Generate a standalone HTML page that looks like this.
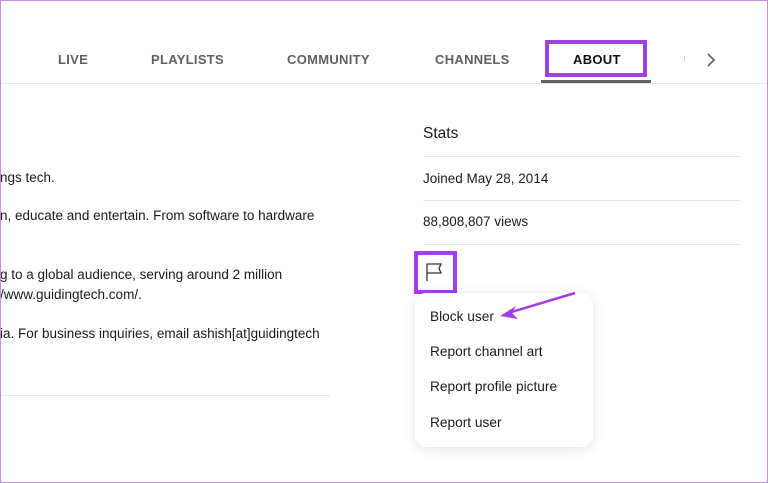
<!DOCTYPE html>
<html><head><style>
body{margin:0;width:768px;height:483px;overflow:hidden;background:#fff;font-family:"Liberation Sans",Arial,sans-serif;position:relative}
.frame{position:absolute;left:0;top:0;width:766px;height:481px;border:1px solid #c58fdd;pointer-events:none}
.t{position:absolute;white-space:nowrap}
.tab{position:absolute;top:52px;font-size:13px;font-weight:bold;color:#606060;letter-spacing:.3px}
.hl{position:absolute;background:#e5e5e5;height:1px}
.txt{font-size:13.5px;color:#1a1a1a}
.menu{position:absolute;left:415px;top:293px;width:178px;height:154px;background:#fff;border-radius:11px;box-shadow:0 2px 12px rgba(0,0,0,.12)}
.mi{position:absolute;left:15px;font-size:13.7px;color:#1a1a1a;white-space:nowrap}
</style></head><body>
<div class="tab" style="left:58px">LIVE</div>
<div class="tab" style="left:151px">PLAYLISTS</div>
<div class="tab" style="left:287px">COMMUNITY</div>
<div class="tab" style="left:435px">CHANNELS</div>
<div class="tab" style="left:573px;color:#0f0f0f">ABOUT</div>
<div style="position:absolute;left:545px;top:40px;width:94px;height:29px;border:4px solid #a43ee8"></div>
<div style="position:absolute;left:684px;top:56px;width:1px;height:5px;background:#ccc"></div>
<svg style="position:absolute;left:704px;top:52px" width="14" height="16"><path d="M4 2 L10 8 L4 14" stroke="#606060" stroke-width="1.6" fill="none"/></svg>
<div class="hl" style="left:0;top:83px;width:768px"></div>
<div style="position:absolute;left:541px;top:80px;width:110px;height:3px;background:#606060"></div>

<div class="t txt" style="left:0;top:170px">ngs tech.</div>
<div class="t txt" style="left:0;top:208px">n, educate and entertain. From software to hardware</div>
<div class="t txt" style="left:0;top:267px">g to a global audience, serving around 2 million</div>
<div class="t txt" style="left:0;top:287px">/www.guidingtech.com/.</div>
<div class="t txt" style="left:0;top:326px">ia. For business inquiries, email ashish[at]guidingtech</div>
<div class="hl" style="left:0;top:395px;width:330px"></div>

<div class="t" style="left:423px;top:125px;font-size:15.5px;color:#1a1a1a">Stats</div>
<div class="hl" style="left:423px;top:156px;width:317px"></div>
<div class="t txt" style="left:423px;top:171px">Joined May 28, 2014</div>
<div class="hl" style="left:423px;top:200px;width:317px"></div>
<div class="t txt" style="left:423px;top:214px">88,808,807 views</div>
<div class="hl" style="left:423px;top:244px;width:317px"></div>

<div style="position:absolute;left:414px;top:251px;width:35px;height:35px;border:4px solid #a43ee8"></div>
<svg style="position:absolute;left:424px;top:261px" width="22" height="22"><path d="M3 20 V3 H17 L15 7.5 L17 12 H3" stroke="#333" stroke-width="1.3" fill="none" stroke-linejoin="miter"/></svg>

<div class="menu">
<div class="mi" style="top:16px">Block user</div>
<div class="mi" style="top:51px">Report channel art</div>
<div class="mi" style="top:86px">Report profile picture</div>
<div class="mi" style="top:122px">Report user</div>
</div>
<svg style="position:absolute;left:490px;top:285px" width="95" height="45"><path d="M85 8 L18 28" stroke="#a43ee8" stroke-width="2.5" fill="none"/><path d="M10 31 L26 21 L22 28 L28 34 Z" fill="#a43ee8"/></svg>
<div class="frame"></div>
</body></html>
